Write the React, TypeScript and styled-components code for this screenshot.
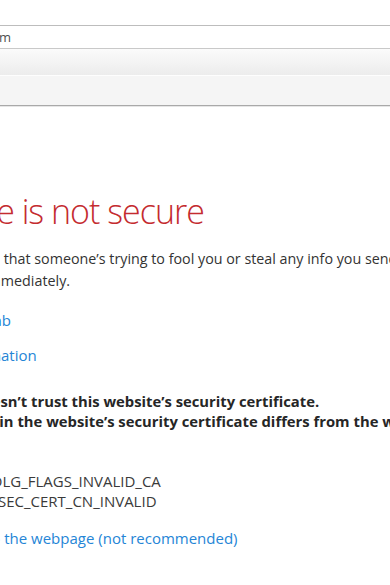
import React, { FC } from "react";
import styled, { createGlobalStyle } from "styled-components";

const GlobalStyle = createGlobalStyle`
  html, body {
    margin: 0;
    padding: 0;
    background: #ffffff;
    overflow: hidden;
  }
  body {
    font-family: "Segoe UI", "Open Sans", "Noto Sans", sans-serif;
  }
`;

const StyledWindow = styled.div`
  width: 390px;
  height: 585px;
  overflow: hidden;
  background: #ffffff;
`;

const StyledTitleBar = styled.div`
  height: 25px;
  background: #ffffff;
  border-bottom: 1px solid #bdbdbd;
`;

const StyledAddressBar = styled.div`
  display: flex;
  align-items: center;
  height: 22px;
  background: #ffffff;
  border-bottom: 1px solid #c9c9c9;
  white-space: nowrap;
`;

// the visible end of the url; the rest runs off the left edge
const StyledUrlSlot = styled.div`
  display: flex;
  justify-content: flex-end;
  width: 11px;
  font-size: 13px;
  color: #505050;
`;

const StyledToolbar = styled.div`
  height: 26px;
  background: linear-gradient(#fbfbfb, #ececec);
  border-bottom: 1px solid #fdfdfd;
`;

const StyledFavBar = styled.div`
  height: 29px;
  background: #f5f5f5;
  border-bottom: 1px solid #a9a9a9;
  box-shadow: 0 1px 0 #e6e6e6;
`;

const StyledContent = styled.div`
  display: flex;
  flex-direction: column;
  align-items: flex-start;
  padding-top: 82px;
  white-space: nowrap;
  color: #333333;
`;

const StyledTitle = styled.h1<{ $shift: number }>`
  margin: 0 0 0 ${(p) => p.$shift}px;
  font-family: "Segoe UI Light", "Open Sans", "Noto Sans", sans-serif;
  font-weight: 300;
  font-size: 34px;
  letter-spacing: -1px;
  line-height: 46px;
  color: #c42b2f;
`;

const StyledParagraph = styled.div`
  display: flex;
  flex-direction: column;
  margin-top: 14px;
  font-size: 14.3px;
  line-height: 22px;
  color: #333333;
`;

const StyledLine = styled.span<{ $shift: number }>`
  margin-left: ${(p) => p.$shift}px;
`;

const StyledLink = styled.a<{ $gap: number; $shift: number }>`
  margin: ${(p) => p.$gap}px 0 0 ${(p) => p.$shift}px;
  font-size: 15px;
  line-height: 22px;
  color: #2585d6;
  text-decoration: none;
`;

const StyledNote = styled.div`
  display: flex;
  flex-direction: column;
  margin-top: 25px;
  font-size: 14.8px;
  line-height: 20px;
  font-weight: 700;
  color: #262626;
`;

const StyledCodes = styled.div`
  display: flex;
  flex-direction: column;
  margin-top: 40px;
  font-size: 15px;
  line-height: 20px;
  color: #3a3a3a;
`;

const App: FC = () => {
  return (
    <StyledWindow>
      <GlobalStyle />
      <StyledTitleBar />
      <StyledAddressBar>
        <StyledUrlSlot>
          <span>https://self-signed.badssl.com</span>
        </StyledUrlSlot>
      </StyledAddressBar>
      <StyledToolbar />
      <StyledFavBar />
      <StyledContent>
        <StyledTitle $shift={-101}>This site is not secure</StyledTitle>
        <StyledParagraph>
          <StyledLine $shift={-111}>
            This might mean that someone’s trying to fool you or steal any info you send to the server. You should close this site
          </StyledLine>
          <StyledLine $shift={-16}>immediately.</StyledLine>
        </StyledParagraph>
        <StyledLink href="#" $gap={17} $shift={-83}>
          Close this tab
        </StyledLink>
        <StyledLink href="#" $gap={13} $shift={-87}>
          More information
        </StyledLink>
        <StyledNote>
          <StyledLine $shift={-88}>Your PC doesn’t trust this website’s security certificate.</StyledLine>
          <StyledLine $shift={-110}>
            The hostname in the website’s security certificate differs from the website you are trying to view.
          </StyledLine>
        </StyledNote>
        <StyledCodes>
          <StyledLine $shift={-92}>Error Code: DLG_FLAGS_INVALID_CA</StyledLine>
          <StyledLine $shift={-89}>DLG_FLAGS_SEC_CERT_CN_INVALID</StyledLine>
        </StyledCodes>
        <StyledLink href="#" $gap={16} $shift={-60}>
          Go on to the webpage (not recommended)
        </StyledLink>
      </StyledContent>
    </StyledWindow>
  );
};

export default App;
